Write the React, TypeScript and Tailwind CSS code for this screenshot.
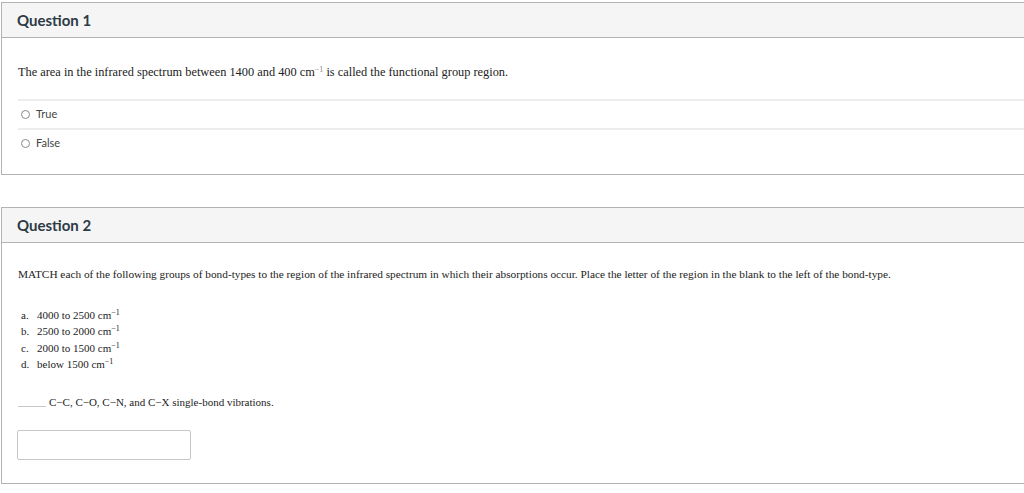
const lato = { fontFamily: 'Lato, "Open Sans", sans-serif' }
const times = { fontFamily: '"Liberation Serif", "Times New Roman", serif' }

function QuestionHeader({ title }: { title: string }) {
  return (
    <div className="h-[35px] bg-[#f5f5f5] border-b border-[#b3b3b3] flex items-center pl-[15px]">
      <h2 className="text-[15px] font-bold text-[#2d3b45]" style={lato}>
        {title}
      </h2>
    </div>
  )
}

function Radio({ label }: { label: string }) {
  return (
    <div className="h-[29px] flex items-center border-t-2 border-[#ededed] pl-[3px]">
      <span className="w-[9px] h-[9px] rounded-full border border-[#8a8a8a] bg-white" />
      <span className="ml-[6px] text-[11px] text-[#444]" style={lato}>
        {label}
      </span>
    </div>
  )
}

export default function App() {
  const choices = [
    ['a.', '4000 to 2500 cm'],
    ['b.', '2500 to 2000 cm'],
    ['c.', '2000 to 1500 cm'],
    ['d.', 'below 1500 cm'],
  ]

  return (
    <div className="bg-white w-[1024px] h-[493px] overflow-hidden pt-[2px] pl-[1px]">
      {/* 문제 1 */}
      <section className="border-l border-t border-b border-[#b3b3b3] w-[1040px]">
        <QuestionHeader title="Question 1" />
        <div className="pl-[16px] pb-[17px]">
          <p className="text-[12.35px] text-[#222] h-[61px] pt-[26px] leading-[16px]" style={times}>
            The area in the infrared spectrum between 1400 and 400 cm
            <sup className="text-[8px] text-[#888]">−1</sup> is called the functional group region.
          </p>
          <Radio label="True" />
          <Radio label="False" />
        </div>
      </section>

      {/* 문제 2 */}
      <section className="mt-[32px] border-l border-t border-b border-[#b3b3b3] w-[1040px]">
        <QuestionHeader title="Question 2" />
        <div className="pl-[16px] pb-[23px]">
          <p className="text-[11.3px] text-[#222] pt-[23px] leading-[16px]" style={times}>
            MATCH each of the following groups of bond-types to the region of the infrared spectrum in which their
            absorptions occur. Place the letter of the region in the blank to the left of the bond-type.
          </p>

          <ul className="mt-[25px] pl-[3px] text-[11px] text-[#222]" style={times}>
            {choices.map(([letter, text]) => (
              <li key={letter} className="flex h-[16.3px] items-center">
                <span className="w-[16px]">{letter}</span>
                <span>
                  {text}
                  <sup className="text-[8px]">−1</sup>
                </span>
              </li>
            ))}
          </ul>

          <p className="mt-[22px] flex items-end text-[11px] text-[#222] leading-[16px]" style={times}>
            <span className="inline-block w-[28px] border-b border-[#c8c8c8] mb-[3px] mr-[3px]" />
            C−C, C−O, C−N, and C−X single-bond vibrations.
          </p>

          <input
            type="text"
            className="mt-[20px] -ml-px block w-[174px] h-[30px] border border-[#c8c8c8] rounded-[2px] bg-white"
          />
        </div>
      </section>
    </div>
  )
}
